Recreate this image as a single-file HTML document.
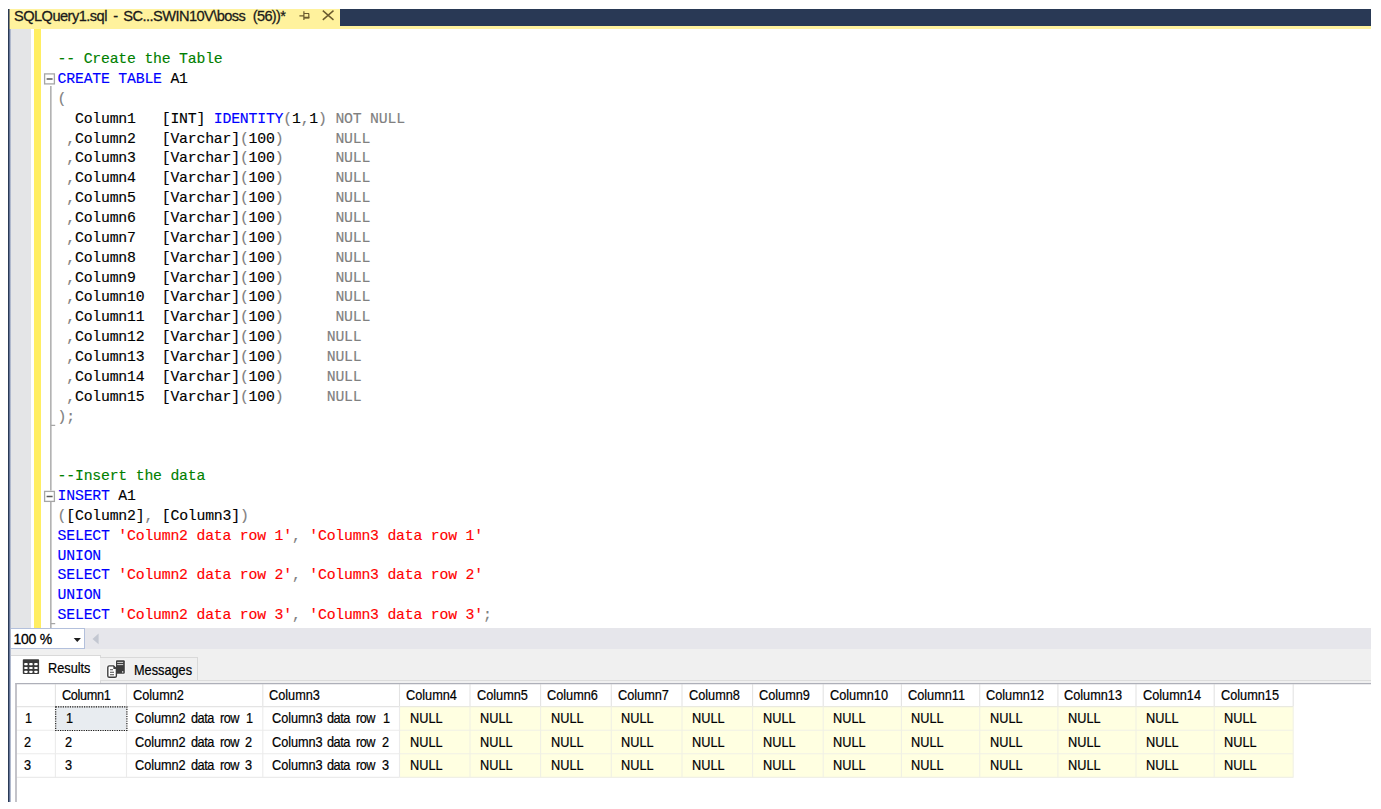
<!DOCTYPE html>
<html>
<head>
<meta charset="utf-8">
<title>SQLQuery1.sql</title>
<style>
html,body{margin:0;padding:0;background:#fff;}
body{width:1381px;height:809px;position:relative;overflow:hidden;font-family:"Liberation Sans",sans-serif;}
.abs{position:absolute;}
#strip{left:8px;top:9px;width:1363px;height:17px;background:#293955;}
#stripline{left:8px;top:26px;width:1363px;height:3px;background:#fff29d;}
#tab{left:8px;top:9px;width:332px;height:20px;background:#fff29d;}
#leftedge{left:8px;top:9px;width:1px;height:793px;background:#293955;}
#leftedge2{left:9px;top:29px;width:2px;height:773px;background:linear-gradient(to right,#3d507a 0,#8c99b6 50%,#d3d8e3 100%);}
#leftedge3{left:9px;top:9px;width:1px;height:20px;background:#8f8c6f;}
#gutter{left:10px;top:29px;width:21px;height:599px;background:#e4e5e7;}
#ybar{left:34px;top:29px;width:7px;height:599px;background:#ffee62;}
.ln{position:absolute;left:57.6px;height:20px;line-height:20px;font-family:"Liberation Mono",monospace;font-size:14.8px;letter-spacing:-0.2px;-webkit-text-stroke:0.14px;white-space:pre;color:#000;}
.k{color:#0000ff;}
.c{color:#008000;}
.g{color:#808080;}
.s{color:#ff0000;}
#zstrip{left:10px;top:628px;width:1361px;height:21px;background:#e6e6eb;}
#zbelow{left:10px;top:649px;width:1361px;height:34px;background:#f0f0f0;}
#zoombox{left:10px;top:628px;width:75px;height:21px;background:#fff;border:1px solid #b3c0dc;box-sizing:border-box;}
#rtab{left:10px;top:655px;width:91px;height:28px;background:#fff;border-top:1px solid #d9d9d9;border-right:1px solid #d9d9d9;box-sizing:border-box;}
#mtab{left:100px;top:657px;width:98px;height:24px;background:#f0f0f0;border:1px solid #d9d9d9;border-left:none;box-sizing:border-box;}
#gridbg{left:10px;top:683px;width:1361px;height:119px;background:#fff;}
.t{position:absolute;height:18px;line-height:18px;white-space:pre;}
</style>
</head>
<body>
<div class="abs" id="strip"></div>
<div class="abs" id="stripline"></div>
<div class="abs" id="tab"></div>
<div class="abs" id="gutter"></div>
<div class="abs" id="ybar"></div>
<div class="abs" id="code">
<div class="ln" style="top:49.20px"><span class="c">-- Create the Table</span></div>
<div class="ln" style="top:69.06px"><span class="k">CREATE TABLE</span> A1</div>
<div class="ln" style="top:88.91px"><span class="g">(</span></div>
<div class="ln" style="top:108.77px">  Column1   [INT] <span class="k">IDENTITY</span><span class="g">(</span>1<span class="g">,</span>1<span class="g">)</span> <span class="g">NOT NULL</span></div>
<div class="ln" style="top:128.63px"> <span class="g">,</span>Column2   [Varchar]<span class="g">(</span>100<span class="g">)</span>      <span class="g">NULL</span></div>
<div class="ln" style="top:148.49px"> <span class="g">,</span>Column3   [Varchar]<span class="g">(</span>100<span class="g">)</span>      <span class="g">NULL</span></div>
<div class="ln" style="top:168.34px"> <span class="g">,</span>Column4   [Varchar]<span class="g">(</span>100<span class="g">)</span>      <span class="g">NULL</span></div>
<div class="ln" style="top:188.20px"> <span class="g">,</span>Column5   [Varchar]<span class="g">(</span>100<span class="g">)</span>      <span class="g">NULL</span></div>
<div class="ln" style="top:208.06px"> <span class="g">,</span>Column6   [Varchar]<span class="g">(</span>100<span class="g">)</span>      <span class="g">NULL</span></div>
<div class="ln" style="top:227.91px"> <span class="g">,</span>Column7   [Varchar]<span class="g">(</span>100<span class="g">)</span>      <span class="g">NULL</span></div>
<div class="ln" style="top:247.77px"> <span class="g">,</span>Column8   [Varchar]<span class="g">(</span>100<span class="g">)</span>      <span class="g">NULL</span></div>
<div class="ln" style="top:267.63px"> <span class="g">,</span>Column9   [Varchar]<span class="g">(</span>100<span class="g">)</span>      <span class="g">NULL</span></div>
<div class="ln" style="top:287.48px"> <span class="g">,</span>Column10  [Varchar]<span class="g">(</span>100<span class="g">)</span>      <span class="g">NULL</span></div>
<div class="ln" style="top:307.34px"> <span class="g">,</span>Column11  [Varchar]<span class="g">(</span>100<span class="g">)</span>      <span class="g">NULL</span></div>
<div class="ln" style="top:327.20px"> <span class="g">,</span>Column12  [Varchar]<span class="g">(</span>100<span class="g">)</span>     <span class="g">NULL</span></div>
<div class="ln" style="top:347.06px"> <span class="g">,</span>Column13  [Varchar]<span class="g">(</span>100<span class="g">)</span>     <span class="g">NULL</span></div>
<div class="ln" style="top:366.91px"> <span class="g">,</span>Column14  [Varchar]<span class="g">(</span>100<span class="g">)</span>     <span class="g">NULL</span></div>
<div class="ln" style="top:386.77px"> <span class="g">,</span>Column15  [Varchar]<span class="g">(</span>100<span class="g">)</span>     <span class="g">NULL</span></div>
<div class="ln" style="top:406.63px"><span class="g">);</span></div>
<div class="ln" style="top:466.20px"><span class="c">--Insert the data</span></div>
<div class="ln" style="top:486.05px"><span class="k">INSERT</span> A1</div>
<div class="ln" style="top:505.91px"><span class="g">(</span>[Column2]<span class="g">,</span> [Column3]<span class="g">)</span></div>
<div class="ln" style="top:525.77px"><span class="k">SELECT</span> <span class="s">'Column2 data row 1'</span><span class="g">,</span> <span class="s">'Column3 data row 1'</span></div>
<div class="ln" style="top:545.62px"><span class="k">UNION</span></div>
<div class="ln" style="top:565.48px"><span class="k">SELECT</span> <span class="s">'Column2 data row 2'</span><span class="g">,</span> <span class="s">'Column3 data row 2'</span></div>
<div class="ln" style="top:585.34px"><span class="k">UNION</span></div>
<div class="ln" style="top:605.20px"><span class="k">SELECT</span> <span class="s">'Column2 data row 3'</span><span class="g">,</span> <span class="s">'Column3 data row 3'</span><span class="g">;</span></div>
</div>
<div class="abs" id="zbelow"></div>
<div class="abs" id="zstrip"></div>
<div class="abs" id="zoombox"></div>
<div class="abs" id="rtab"></div>
<div class="abs" id="mtab"></div>
<div class="abs" id="gridbg"></div>
<div class="abs" style="left:400.0px;top:707.1px;width:893.2px;height:70.3px;background:#ffffe1"></div>
<div class="abs" style="left:56px;top:707px;width:71px;height:23px;background:#e8ecf0"></div>
<svg class="abs" style="left:0;top:0" width="1381" height="809" viewBox="0 0 1381 809">
<g fill="none" stroke-width="1.1">
<path d="M16.5 706.6H399.5" stroke="#e4e4e4"/>
<path d="M399.5 706.6H1293.2" stroke="#e9e9e0"/>
<path d="M16.5 730.2H399.5" stroke="#ebebeb"/>
<path d="M399.5 730.2H1293.2" stroke="#f0f0e6"/>
<path d="M16.5 753.8H399.5" stroke="#ebebeb"/>
<path d="M399.5 753.8H1293.2" stroke="#f0f0e6"/>
<path d="M16.5 777.4H399.5" stroke="#ebebeb"/>
<path d="M399.5 777.4H1293.2" stroke="#f0f0e6"/>
<path d="M55.4 684.2V706.6" stroke="#e3e3e3"/>
<path d="M55.4 706.6V777.4" stroke="#ebebeb"/>
<path d="M126.5 684.2V706.6" stroke="#e3e3e3"/>
<path d="M126.5 706.6V777.4" stroke="#ebebeb"/>
<path d="M262.8 684.2V706.6" stroke="#e3e3e3"/>
<path d="M262.8 706.6V777.4" stroke="#ebebeb"/>
<path d="M399.5 684.2V706.6" stroke="#e3e3e3"/>
<path d="M399.5 706.6V777.4" stroke="#ebebeb"/>
<path d="M470.0 684.2V706.6" stroke="#e3e3e3"/>
<path d="M470.0 706.6V777.4" stroke="#f0f0e4"/>
<path d="M540.6 684.2V706.6" stroke="#e3e3e3"/>
<path d="M540.6 706.6V777.4" stroke="#f0f0e4"/>
<path d="M611.3 684.2V706.6" stroke="#e3e3e3"/>
<path d="M611.3 706.6V777.4" stroke="#f0f0e4"/>
<path d="M682.0 684.2V706.6" stroke="#e3e3e3"/>
<path d="M682.0 706.6V777.4" stroke="#f0f0e4"/>
<path d="M752.6 684.2V706.6" stroke="#e3e3e3"/>
<path d="M752.6 706.6V777.4" stroke="#f0f0e4"/>
<path d="M823.2 684.2V706.6" stroke="#e3e3e3"/>
<path d="M823.2 706.6V777.4" stroke="#f0f0e4"/>
<path d="M901.4 684.2V706.6" stroke="#e3e3e3"/>
<path d="M901.4 706.6V777.4" stroke="#f0f0e4"/>
<path d="M979.7 684.2V706.6" stroke="#e3e3e3"/>
<path d="M979.7 706.6V777.4" stroke="#f0f0e4"/>
<path d="M1057.9 684.2V706.6" stroke="#e3e3e3"/>
<path d="M1057.9 706.6V777.4" stroke="#f0f0e4"/>
<path d="M1136.0 684.2V706.6" stroke="#e3e3e3"/>
<path d="M1136.0 706.6V777.4" stroke="#f0f0e4"/>
<path d="M1214.2 684.2V706.6" stroke="#e3e3e3"/>
<path d="M1214.2 706.6V777.4" stroke="#f0f0e4"/>
<path d="M1293.2 684.2V706.6" stroke="#e3e3e3"/>
<path d="M1293.2 706.6V777.4" stroke="#f0f0e4"/>
</g>
<rect x="55.7" y="706.9" width="71.2" height="23.6" fill="none" stroke="#111" stroke-width="1.1" stroke-dasharray="1.18 1.18"/>
<!-- tab icons -->
<g stroke="#6b5b2e" fill="none" stroke-width="1.2">
<path d="M299.4 15.8H303.6M303.9 11.3V20M303.9 13.5H309M308.8 13.5V17.9"/>
<path d="M303.9 17.7H309.3" stroke-width="1.9"/>
<path d="M322.8 10.6L333.5 19.9M333.5 10.6L322.8 19.9" stroke-width="1.45"/>
</g>
<!-- outline -->
<g stroke="#a6a6a6" fill="none" stroke-width="1.4">
<path d="M50.85 86V490.5M50.85 501.5V628"/>
<path d="M50.85 425.3H55.2M50.85 623.6H55.2" stroke-width="1.2"/>
<rect x="44.6" y="73.9" width="9.8" height="10" fill="#fff" stroke-width="1.3"/>
<rect x="44.6" y="491.4" width="9.8" height="10" fill="#fff" stroke-width="1.3"/>
<path d="M46.6 79H52.6M46.6 496.5H52.6" stroke="#5a5a5a" stroke-width="1.4"/>
</g>
<!-- zoom combo arrow + scroll arrow -->
<path d="M73.7 637.9H80.9L77.3 642Z" fill="#1e1e1e"/>
<path d="M98.6 633.6V644.2L92.5 638.9Z" fill="#c3c7d1"/>
<!-- results icon -->
<g>
<rect x="22.8" y="659.3" width="16.3" height="14.7" rx="0.8" fill="#3a3a3a"/>
<g fill="#fff">
<rect x="24.2" y="663.1" width="3.5" height="2.2" rx="0.8"/><rect x="29.2" y="663.1" width="3.5" height="2.2" rx="0.8"/><rect x="34.2" y="663.1" width="3.5" height="2.2" rx="0.8"/>
<rect x="24.2" y="666.9" width="3.5" height="2.2" rx="0.8"/><rect x="29.2" y="666.9" width="3.5" height="2.2" rx="0.8"/><rect x="34.2" y="666.9" width="3.5" height="2.2" rx="0.8"/>
<rect x="24.2" y="670.7" width="3.5" height="2.2" rx="0.8"/><rect x="29.2" y="670.7" width="3.5" height="2.2" rx="0.8"/><rect x="34.2" y="670.7" width="3.5" height="2.2" rx="0.8"/>
</g>
</g>
<!-- messages icon -->
<g>
<rect x="115.2" y="659.5" width="10.4" height="15" rx="1.2" fill="#fafafa"/>
<rect x="106.4" y="664.5" width="11.4" height="14.2" rx="1.6" fill="#fafafa"/>
<rect x="116" y="660.3" width="8.8" height="13.5" rx="1" fill="#3d3d3d"/>
<path d="M117.2 662.4H123.2M117.2 664.6H123.2" stroke="#d8d8d8" stroke-width="1"/>
<rect x="122" y="671.2" width="1.3" height="1.4" fill="#e0e0e0"/>
<path d="M109.3 665.9H113.6L116.4 668.7V675.9Q116.4 677.3 115 677.3H109.3Q107.8 677.3 107.8 675.9V667.4Q107.8 665.9 109.3 665.9Z" fill="#fff" stroke="#3d3d3d" stroke-width="1.4"/>
<path d="M113.4 665.9L116.5 669H113.4Z" fill="#3d3d3d"/>
<path d="M110 669.8H113M110 672.3H114M110 674.7H114" stroke="#4a4a4a" stroke-width="1.1"/>
</g>
<!-- grid frame -->
<path d="M100 680.5H1371" stroke="#dcdcdc" stroke-width="1" fill="none"/>
<path d="M15.5 683.6H1371" stroke="#aeb0b9" stroke-width="1.3" fill="none"/>
<path d="M16 683V802" stroke="#b4b4bc" stroke-width="1.6" fill="none"/>
</svg>
<div class="t" style="left:14.00px;top:6.94px;font-size:14.6px;letter-spacing:-0.533px;color:#1a1a1a;-webkit-text-stroke:0.28px">SQLQuery1.sql</div>
<div class="t" style="left:113.30px;top:6.94px;font-size:14.6px;letter-spacing:0.000px;color:#1a1a1a;-webkit-text-stroke:0.28px">-</div>
<div class="t" style="left:123.30px;top:6.94px;font-size:14.6px;letter-spacing:-0.550px;color:#1a1a1a;-webkit-text-stroke:0.28px">SC...SWIN10V\boss</div>
<div class="t" style="left:252.70px;top:6.94px;font-size:14.6px;letter-spacing:-0.640px;color:#1a1a1a;-webkit-text-stroke:0.28px">(56))*</div>
<div class="t" style="left:13.40px;top:630.45px;font-size:14px;letter-spacing:-0.200px;color:#000;-webkit-text-stroke:0.28px">100 %</div>
<div class="t" style="left:47.60px;top:658.67px;font-size:14.8px;letter-spacing:0.000px;color:#000;transform:scaleX(0.86);transform-origin:0 0;-webkit-text-stroke:0.22px">Results</div>
<div class="t" style="left:133.70px;top:661.07px;font-size:14.8px;letter-spacing:0.000px;color:#000;transform:scaleX(0.86);transform-origin:0 0;-webkit-text-stroke:0.22px">Messages</div>
<div class="t" style="left:61.60px;top:685.87px;font-size:14.8px;letter-spacing:-0.400px;color:#000;transform:scaleX(0.86);transform-origin:0 0;-webkit-text-stroke:0.22px">Column1</div>
<div class="t" style="left:133.00px;top:685.87px;font-size:14.8px;letter-spacing:0.000px;color:#000;transform:scaleX(0.86);transform-origin:0 0;-webkit-text-stroke:0.22px">Column2</div>
<div class="t" style="left:269.30px;top:685.87px;font-size:14.8px;letter-spacing:0.000px;color:#000;transform:scaleX(0.86);transform-origin:0 0;-webkit-text-stroke:0.22px">Column3</div>
<div class="t" style="left:406.00px;top:685.87px;font-size:14.8px;letter-spacing:0.000px;color:#000;transform:scaleX(0.86);transform-origin:0 0;-webkit-text-stroke:0.22px">Column4</div>
<div class="t" style="left:476.50px;top:685.87px;font-size:14.8px;letter-spacing:0.000px;color:#000;transform:scaleX(0.86);transform-origin:0 0;-webkit-text-stroke:0.22px">Column5</div>
<div class="t" style="left:547.10px;top:685.87px;font-size:14.8px;letter-spacing:0.000px;color:#000;transform:scaleX(0.86);transform-origin:0 0;-webkit-text-stroke:0.22px">Column6</div>
<div class="t" style="left:617.80px;top:685.87px;font-size:14.8px;letter-spacing:0.000px;color:#000;transform:scaleX(0.86);transform-origin:0 0;-webkit-text-stroke:0.22px">Column7</div>
<div class="t" style="left:688.50px;top:685.87px;font-size:14.8px;letter-spacing:0.000px;color:#000;transform:scaleX(0.86);transform-origin:0 0;-webkit-text-stroke:0.22px">Column8</div>
<div class="t" style="left:759.10px;top:685.87px;font-size:14.8px;letter-spacing:0.000px;color:#000;transform:scaleX(0.86);transform-origin:0 0;-webkit-text-stroke:0.22px">Column9</div>
<div class="t" style="left:829.70px;top:685.87px;font-size:14.8px;letter-spacing:0.000px;color:#000;transform:scaleX(0.86);transform-origin:0 0;-webkit-text-stroke:0.22px">Column10</div>
<div class="t" style="left:907.90px;top:685.87px;font-size:14.8px;letter-spacing:0.000px;color:#000;transform:scaleX(0.86);transform-origin:0 0;-webkit-text-stroke:0.22px">Column11</div>
<div class="t" style="left:986.20px;top:685.87px;font-size:14.8px;letter-spacing:0.000px;color:#000;transform:scaleX(0.86);transform-origin:0 0;-webkit-text-stroke:0.22px">Column12</div>
<div class="t" style="left:1064.40px;top:685.87px;font-size:14.8px;letter-spacing:0.000px;color:#000;transform:scaleX(0.86);transform-origin:0 0;-webkit-text-stroke:0.22px">Column13</div>
<div class="t" style="left:1142.50px;top:685.87px;font-size:14.8px;letter-spacing:0.000px;color:#000;transform:scaleX(0.86);transform-origin:0 0;-webkit-text-stroke:0.22px">Column14</div>
<div class="t" style="left:1220.70px;top:685.87px;font-size:14.8px;letter-spacing:0.000px;color:#000;transform:scaleX(0.86);transform-origin:0 0;-webkit-text-stroke:0.22px">Column15</div>
<div class="t" style="left:25.40px;top:709.17px;font-size:14.8px;letter-spacing:0.000px;color:#000;transform:scaleX(0.86);transform-origin:0 0;-webkit-text-stroke:0.22px">1</div>
<div class="t" style="left:66.30px;top:709.17px;font-size:14.8px;letter-spacing:0.000px;color:#000;transform:scaleX(0.86);transform-origin:0 0;-webkit-text-stroke:0.22px">1</div>
<div class="t" style="left:135.40px;top:709.17px;font-size:14.8px;letter-spacing:-0.067px;color:#000;transform:scaleX(0.86);transform-origin:0 0;-webkit-text-stroke:0.22px">Column2</div>
<div class="t" style="left:190.70px;top:709.17px;font-size:14.8px;letter-spacing:-0.533px;color:#000;transform:scaleX(0.86);transform-origin:0 0;-webkit-text-stroke:0.22px">data</div>
<div class="t" style="left:219.60px;top:709.17px;font-size:14.8px;letter-spacing:-0.600px;color:#000;transform:scaleX(0.86);transform-origin:0 0;-webkit-text-stroke:0.22px">row</div>
<div class="t" style="left:246.40px;top:709.17px;font-size:14.8px;letter-spacing:0.000px;color:#000;transform:scaleX(0.86);transform-origin:0 0;-webkit-text-stroke:0.22px">1</div>
<div class="t" style="left:271.80px;top:709.17px;font-size:14.8px;letter-spacing:-0.067px;color:#000;transform:scaleX(0.86);transform-origin:0 0;-webkit-text-stroke:0.22px">Column3</div>
<div class="t" style="left:327.10px;top:709.17px;font-size:14.8px;letter-spacing:-0.533px;color:#000;transform:scaleX(0.86);transform-origin:0 0;-webkit-text-stroke:0.22px">data</div>
<div class="t" style="left:356.00px;top:709.17px;font-size:14.8px;letter-spacing:-0.600px;color:#000;transform:scaleX(0.86);transform-origin:0 0;-webkit-text-stroke:0.22px">row</div>
<div class="t" style="left:382.80px;top:709.17px;font-size:14.8px;letter-spacing:0.000px;color:#000;transform:scaleX(0.86);transform-origin:0 0;-webkit-text-stroke:0.22px">1</div>
<div class="t" style="left:409.50px;top:709.17px;font-size:14.8px;letter-spacing:0.000px;color:#000;transform:scaleX(0.86);transform-origin:0 0;-webkit-text-stroke:0.22px">NULL</div>
<div class="t" style="left:480.00px;top:709.17px;font-size:14.8px;letter-spacing:0.000px;color:#000;transform:scaleX(0.86);transform-origin:0 0;-webkit-text-stroke:0.22px">NULL</div>
<div class="t" style="left:550.60px;top:709.17px;font-size:14.8px;letter-spacing:0.000px;color:#000;transform:scaleX(0.86);transform-origin:0 0;-webkit-text-stroke:0.22px">NULL</div>
<div class="t" style="left:621.30px;top:709.17px;font-size:14.8px;letter-spacing:0.000px;color:#000;transform:scaleX(0.86);transform-origin:0 0;-webkit-text-stroke:0.22px">NULL</div>
<div class="t" style="left:692.00px;top:709.17px;font-size:14.8px;letter-spacing:0.000px;color:#000;transform:scaleX(0.86);transform-origin:0 0;-webkit-text-stroke:0.22px">NULL</div>
<div class="t" style="left:762.60px;top:709.17px;font-size:14.8px;letter-spacing:0.000px;color:#000;transform:scaleX(0.86);transform-origin:0 0;-webkit-text-stroke:0.22px">NULL</div>
<div class="t" style="left:833.20px;top:709.17px;font-size:14.8px;letter-spacing:0.000px;color:#000;transform:scaleX(0.86);transform-origin:0 0;-webkit-text-stroke:0.22px">NULL</div>
<div class="t" style="left:911.40px;top:709.17px;font-size:14.8px;letter-spacing:0.000px;color:#000;transform:scaleX(0.86);transform-origin:0 0;-webkit-text-stroke:0.22px">NULL</div>
<div class="t" style="left:989.70px;top:709.17px;font-size:14.8px;letter-spacing:0.000px;color:#000;transform:scaleX(0.86);transform-origin:0 0;-webkit-text-stroke:0.22px">NULL</div>
<div class="t" style="left:1067.90px;top:709.17px;font-size:14.8px;letter-spacing:0.000px;color:#000;transform:scaleX(0.86);transform-origin:0 0;-webkit-text-stroke:0.22px">NULL</div>
<div class="t" style="left:1146.00px;top:709.17px;font-size:14.8px;letter-spacing:0.000px;color:#000;transform:scaleX(0.86);transform-origin:0 0;-webkit-text-stroke:0.22px">NULL</div>
<div class="t" style="left:1224.20px;top:709.17px;font-size:14.8px;letter-spacing:0.000px;color:#000;transform:scaleX(0.86);transform-origin:0 0;-webkit-text-stroke:0.22px">NULL</div>
<div class="t" style="left:23.60px;top:732.77px;font-size:14.8px;letter-spacing:0.000px;color:#000;transform:scaleX(0.86);transform-origin:0 0;-webkit-text-stroke:0.22px">2</div>
<div class="t" style="left:65.40px;top:732.77px;font-size:14.8px;letter-spacing:0.000px;color:#000;transform:scaleX(0.86);transform-origin:0 0;-webkit-text-stroke:0.22px">2</div>
<div class="t" style="left:135.40px;top:732.77px;font-size:14.8px;letter-spacing:-0.067px;color:#000;transform:scaleX(0.86);transform-origin:0 0;-webkit-text-stroke:0.22px">Column2</div>
<div class="t" style="left:190.70px;top:732.77px;font-size:14.8px;letter-spacing:-0.533px;color:#000;transform:scaleX(0.86);transform-origin:0 0;-webkit-text-stroke:0.22px">data</div>
<div class="t" style="left:219.60px;top:732.77px;font-size:14.8px;letter-spacing:-0.600px;color:#000;transform:scaleX(0.86);transform-origin:0 0;-webkit-text-stroke:0.22px">row</div>
<div class="t" style="left:245.20px;top:732.77px;font-size:14.8px;letter-spacing:0.000px;color:#000;transform:scaleX(0.86);transform-origin:0 0;-webkit-text-stroke:0.22px">2</div>
<div class="t" style="left:271.80px;top:732.77px;font-size:14.8px;letter-spacing:-0.067px;color:#000;transform:scaleX(0.86);transform-origin:0 0;-webkit-text-stroke:0.22px">Column3</div>
<div class="t" style="left:327.10px;top:732.77px;font-size:14.8px;letter-spacing:-0.533px;color:#000;transform:scaleX(0.86);transform-origin:0 0;-webkit-text-stroke:0.22px">data</div>
<div class="t" style="left:356.00px;top:732.77px;font-size:14.8px;letter-spacing:-0.600px;color:#000;transform:scaleX(0.86);transform-origin:0 0;-webkit-text-stroke:0.22px">row</div>
<div class="t" style="left:381.60px;top:732.77px;font-size:14.8px;letter-spacing:0.000px;color:#000;transform:scaleX(0.86);transform-origin:0 0;-webkit-text-stroke:0.22px">2</div>
<div class="t" style="left:409.50px;top:732.77px;font-size:14.8px;letter-spacing:0.000px;color:#000;transform:scaleX(0.86);transform-origin:0 0;-webkit-text-stroke:0.22px">NULL</div>
<div class="t" style="left:480.00px;top:732.77px;font-size:14.8px;letter-spacing:0.000px;color:#000;transform:scaleX(0.86);transform-origin:0 0;-webkit-text-stroke:0.22px">NULL</div>
<div class="t" style="left:550.60px;top:732.77px;font-size:14.8px;letter-spacing:0.000px;color:#000;transform:scaleX(0.86);transform-origin:0 0;-webkit-text-stroke:0.22px">NULL</div>
<div class="t" style="left:621.30px;top:732.77px;font-size:14.8px;letter-spacing:0.000px;color:#000;transform:scaleX(0.86);transform-origin:0 0;-webkit-text-stroke:0.22px">NULL</div>
<div class="t" style="left:692.00px;top:732.77px;font-size:14.8px;letter-spacing:0.000px;color:#000;transform:scaleX(0.86);transform-origin:0 0;-webkit-text-stroke:0.22px">NULL</div>
<div class="t" style="left:762.60px;top:732.77px;font-size:14.8px;letter-spacing:0.000px;color:#000;transform:scaleX(0.86);transform-origin:0 0;-webkit-text-stroke:0.22px">NULL</div>
<div class="t" style="left:833.20px;top:732.77px;font-size:14.8px;letter-spacing:0.000px;color:#000;transform:scaleX(0.86);transform-origin:0 0;-webkit-text-stroke:0.22px">NULL</div>
<div class="t" style="left:911.40px;top:732.77px;font-size:14.8px;letter-spacing:0.000px;color:#000;transform:scaleX(0.86);transform-origin:0 0;-webkit-text-stroke:0.22px">NULL</div>
<div class="t" style="left:989.70px;top:732.77px;font-size:14.8px;letter-spacing:0.000px;color:#000;transform:scaleX(0.86);transform-origin:0 0;-webkit-text-stroke:0.22px">NULL</div>
<div class="t" style="left:1067.90px;top:732.77px;font-size:14.8px;letter-spacing:0.000px;color:#000;transform:scaleX(0.86);transform-origin:0 0;-webkit-text-stroke:0.22px">NULL</div>
<div class="t" style="left:1146.00px;top:732.77px;font-size:14.8px;letter-spacing:0.000px;color:#000;transform:scaleX(0.86);transform-origin:0 0;-webkit-text-stroke:0.22px">NULL</div>
<div class="t" style="left:1224.20px;top:732.77px;font-size:14.8px;letter-spacing:0.000px;color:#000;transform:scaleX(0.86);transform-origin:0 0;-webkit-text-stroke:0.22px">NULL</div>
<div class="t" style="left:23.60px;top:756.27px;font-size:14.8px;letter-spacing:0.000px;color:#000;transform:scaleX(0.86);transform-origin:0 0;-webkit-text-stroke:0.22px">3</div>
<div class="t" style="left:65.40px;top:756.27px;font-size:14.8px;letter-spacing:0.000px;color:#000;transform:scaleX(0.86);transform-origin:0 0;-webkit-text-stroke:0.22px">3</div>
<div class="t" style="left:135.40px;top:756.27px;font-size:14.8px;letter-spacing:-0.067px;color:#000;transform:scaleX(0.86);transform-origin:0 0;-webkit-text-stroke:0.22px">Column2</div>
<div class="t" style="left:190.70px;top:756.27px;font-size:14.8px;letter-spacing:-0.533px;color:#000;transform:scaleX(0.86);transform-origin:0 0;-webkit-text-stroke:0.22px">data</div>
<div class="t" style="left:219.60px;top:756.27px;font-size:14.8px;letter-spacing:-0.600px;color:#000;transform:scaleX(0.86);transform-origin:0 0;-webkit-text-stroke:0.22px">row</div>
<div class="t" style="left:245.20px;top:756.27px;font-size:14.8px;letter-spacing:0.000px;color:#000;transform:scaleX(0.86);transform-origin:0 0;-webkit-text-stroke:0.22px">3</div>
<div class="t" style="left:271.80px;top:756.27px;font-size:14.8px;letter-spacing:-0.067px;color:#000;transform:scaleX(0.86);transform-origin:0 0;-webkit-text-stroke:0.22px">Column3</div>
<div class="t" style="left:327.10px;top:756.27px;font-size:14.8px;letter-spacing:-0.533px;color:#000;transform:scaleX(0.86);transform-origin:0 0;-webkit-text-stroke:0.22px">data</div>
<div class="t" style="left:356.00px;top:756.27px;font-size:14.8px;letter-spacing:-0.600px;color:#000;transform:scaleX(0.86);transform-origin:0 0;-webkit-text-stroke:0.22px">row</div>
<div class="t" style="left:381.60px;top:756.27px;font-size:14.8px;letter-spacing:0.000px;color:#000;transform:scaleX(0.86);transform-origin:0 0;-webkit-text-stroke:0.22px">3</div>
<div class="t" style="left:409.50px;top:756.27px;font-size:14.8px;letter-spacing:0.000px;color:#000;transform:scaleX(0.86);transform-origin:0 0;-webkit-text-stroke:0.22px">NULL</div>
<div class="t" style="left:480.00px;top:756.27px;font-size:14.8px;letter-spacing:0.000px;color:#000;transform:scaleX(0.86);transform-origin:0 0;-webkit-text-stroke:0.22px">NULL</div>
<div class="t" style="left:550.60px;top:756.27px;font-size:14.8px;letter-spacing:0.000px;color:#000;transform:scaleX(0.86);transform-origin:0 0;-webkit-text-stroke:0.22px">NULL</div>
<div class="t" style="left:621.30px;top:756.27px;font-size:14.8px;letter-spacing:0.000px;color:#000;transform:scaleX(0.86);transform-origin:0 0;-webkit-text-stroke:0.22px">NULL</div>
<div class="t" style="left:692.00px;top:756.27px;font-size:14.8px;letter-spacing:0.000px;color:#000;transform:scaleX(0.86);transform-origin:0 0;-webkit-text-stroke:0.22px">NULL</div>
<div class="t" style="left:762.60px;top:756.27px;font-size:14.8px;letter-spacing:0.000px;color:#000;transform:scaleX(0.86);transform-origin:0 0;-webkit-text-stroke:0.22px">NULL</div>
<div class="t" style="left:833.20px;top:756.27px;font-size:14.8px;letter-spacing:0.000px;color:#000;transform:scaleX(0.86);transform-origin:0 0;-webkit-text-stroke:0.22px">NULL</div>
<div class="t" style="left:911.40px;top:756.27px;font-size:14.8px;letter-spacing:0.000px;color:#000;transform:scaleX(0.86);transform-origin:0 0;-webkit-text-stroke:0.22px">NULL</div>
<div class="t" style="left:989.70px;top:756.27px;font-size:14.8px;letter-spacing:0.000px;color:#000;transform:scaleX(0.86);transform-origin:0 0;-webkit-text-stroke:0.22px">NULL</div>
<div class="t" style="left:1067.90px;top:756.27px;font-size:14.8px;letter-spacing:0.000px;color:#000;transform:scaleX(0.86);transform-origin:0 0;-webkit-text-stroke:0.22px">NULL</div>
<div class="t" style="left:1146.00px;top:756.27px;font-size:14.8px;letter-spacing:0.000px;color:#000;transform:scaleX(0.86);transform-origin:0 0;-webkit-text-stroke:0.22px">NULL</div>
<div class="t" style="left:1224.20px;top:756.27px;font-size:14.8px;letter-spacing:0.000px;color:#000;transform:scaleX(0.86);transform-origin:0 0;-webkit-text-stroke:0.22px">NULL</div>
<div class="abs" id="leftedge"></div><div class="abs" id="leftedge2"></div><div class="abs" id="leftedge3"></div>
</body>
</html>
